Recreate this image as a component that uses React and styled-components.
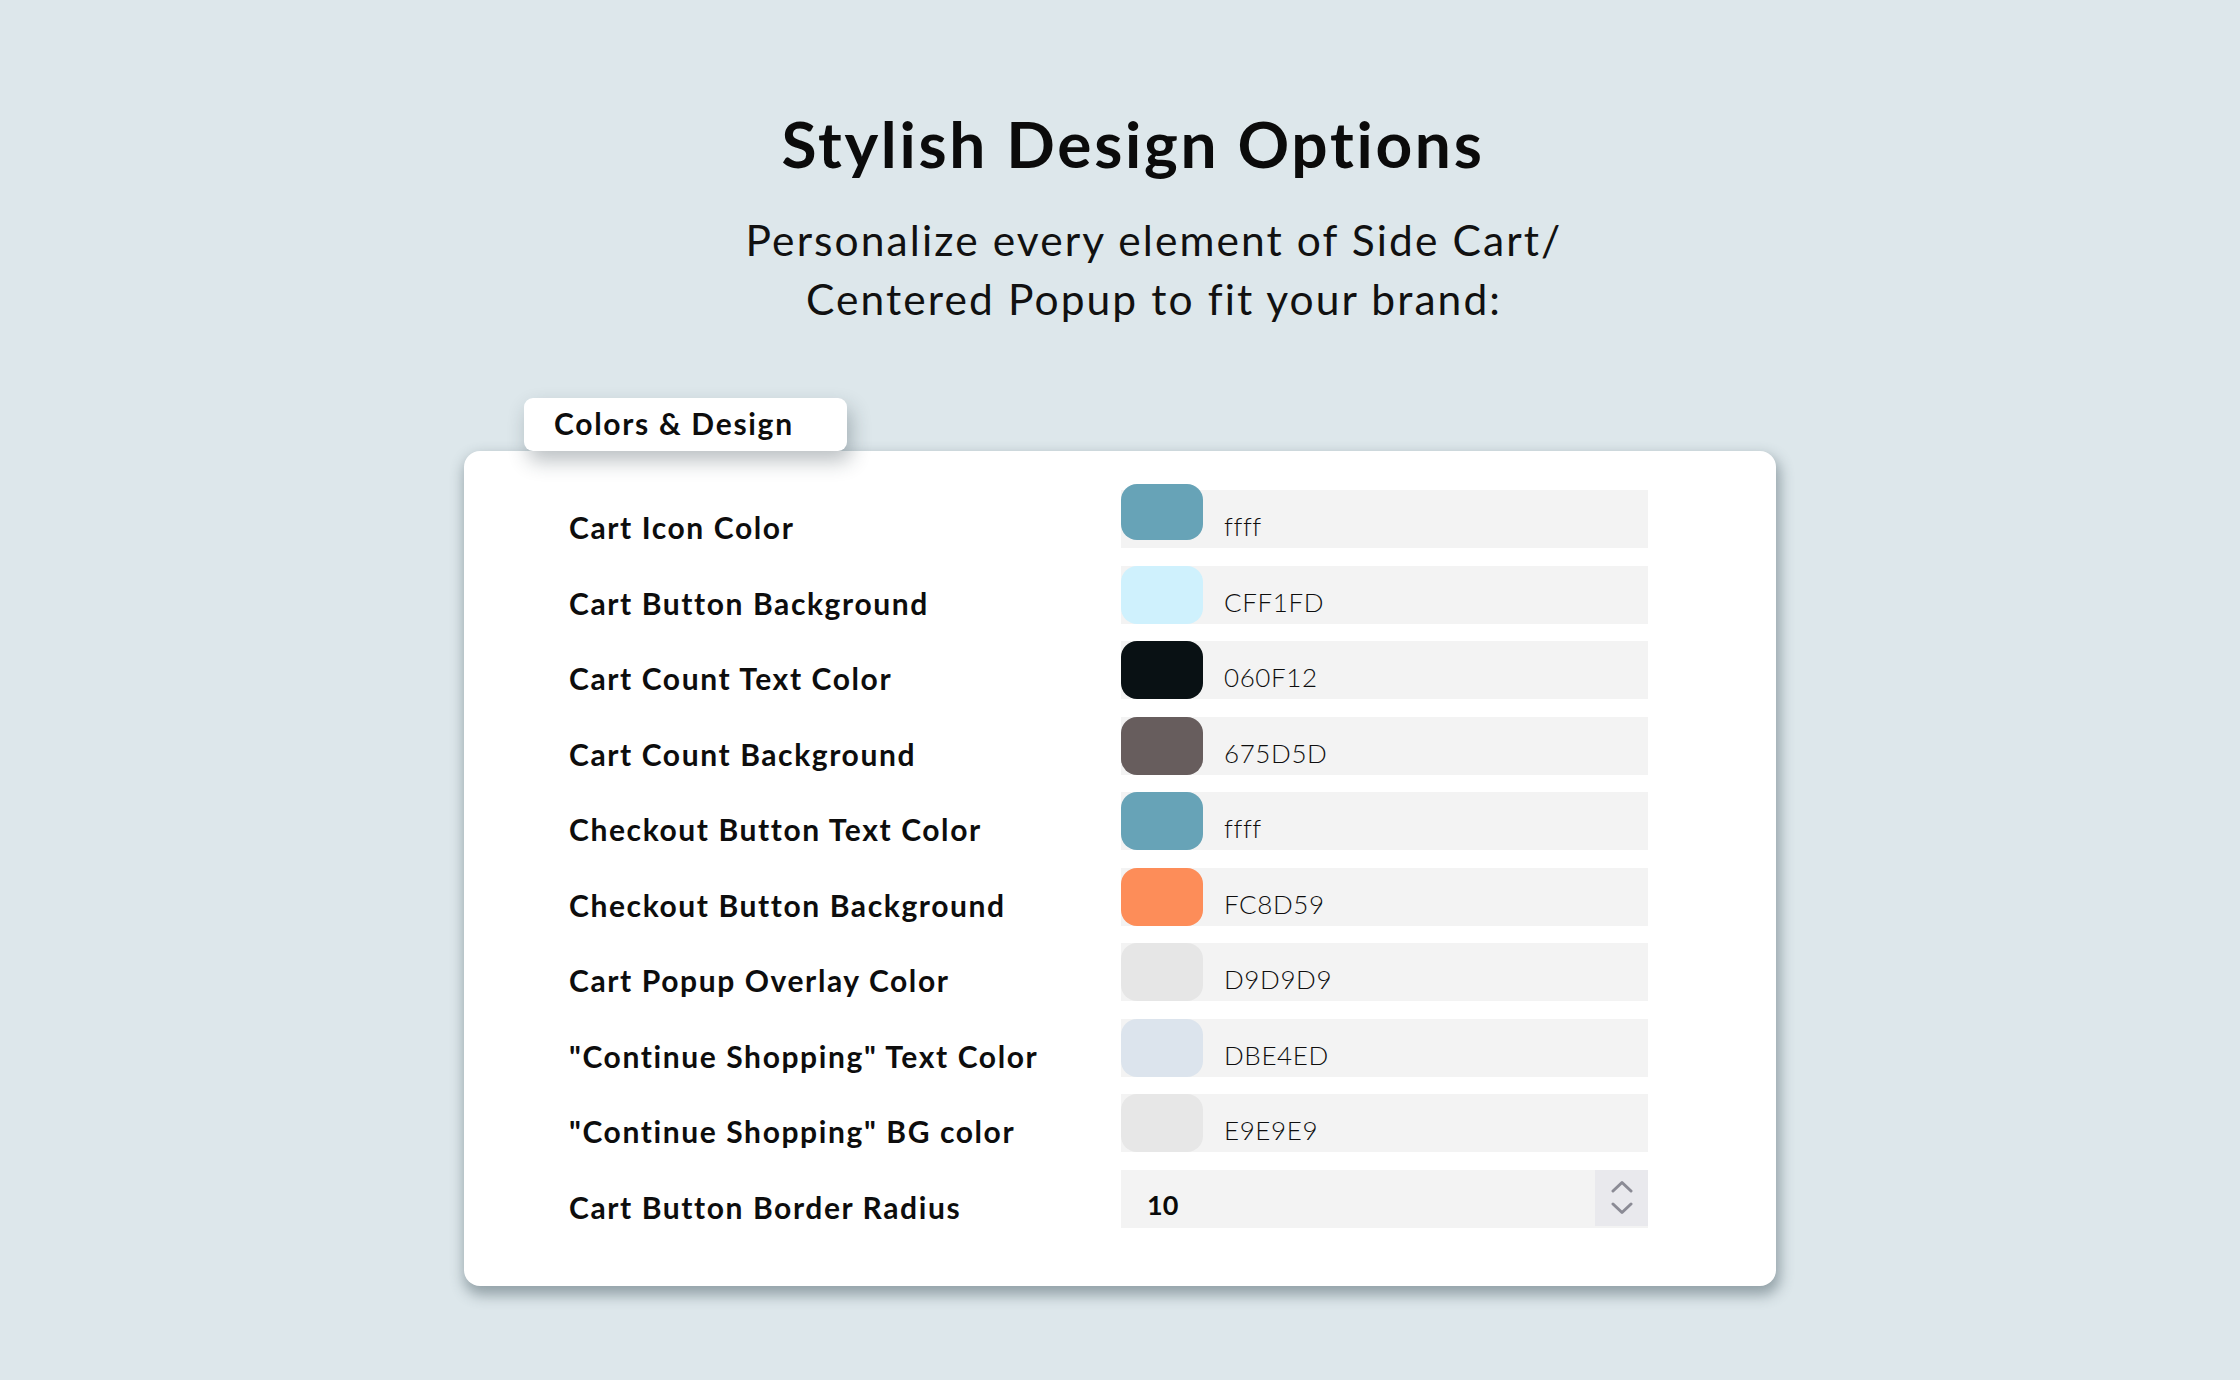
import React from "react";
import styled, { createGlobalStyle } from "styled-components";

const Global = createGlobalStyle`
  html, body { margin: 0; padding: 0; background: #dde7eb; }
  body { font-family: Lato, "Noto Sans", sans-serif; color: #0d0d0d; }
`;

const Page = styled.div`
  width: 2240px;
  height: 1380px;
  display: flex;
  flex-direction: column;
  align-items: center;
  box-sizing: border-box;
  padding-top: 104px;
`;

const Title = styled.h1`
  margin: 0;
  padding-left: 26px;
  font-family: Lato, "Noto Sans", sans-serif;
  font-size: 64px;
  font-weight: 700;
  line-height: 80px;
  letter-spacing: 2.7px;
  color: #0b0b0b;
  text-align: center;
`;

const Subtitle = styled.p`
  margin: 26px 0 0;
  padding-left: 68px;
  font-family: Lato, "Noto Sans", sans-serif;
  font-size: 42.5px;
  font-weight: 400;
  line-height: 59px;
  letter-spacing: 2.1px;
  color: #111;
  text-align: center;
`;

const Panel = styled.section`
  width: 1312px;
  margin-top: 70px;
  display: flex;
  flex-direction: column;
`;

const Tab = styled.div`
  position: relative;
  z-index: 2;
  align-self: flex-start;
  margin-left: 60px;
  width: 323px;
  height: 53px;
  box-sizing: border-box;
  padding: 6px 0 0 30px;
  background: #fff;
  border-radius: 9px;
  box-shadow: 4px 10px 20px rgba(30, 45, 55, 0.3);
  font-size: 30px;
  font-weight: 700;
  line-height: 38px;
  letter-spacing: 1.7px;
  color: #0d0d0d;
`;

const Card = styled.div`
  position: relative;
  z-index: 1;
  height: 835px;
  box-sizing: border-box;
  background: #fff;
  border-radius: 16px;
  padding: 39px 128px 60px 105px;
  box-shadow: 2px 7px 14px 2px rgba(55, 75, 85, 0.45);
  display: grid;
  grid-template-columns: 552px 527px;
  grid-auto-rows: 58px;
  row-gap: 17.5px;
`;

const Label = styled.div`
  padding-top: 19px;
  font-size: 30px;
  font-weight: 700;
  line-height: 36px;
  letter-spacing: 1.6px;
  color: #0d0d0d;
  white-space: nowrap;
`;

const Field = styled.div`
  position: relative;
  display: flex;
  align-items: flex-start;
  height: 58px;
  background: #f3f3f3;
`;

const Swatch = styled.div`
  flex: none;
  width: 82px;
  height: ${(p) => (p.$raised ? "56px" : "58px")};
  margin-top: ${(p) => (p.$raised ? "-6px" : "0")};
  border-radius: 16px;
  background: ${(p) => p.$color};
`;

const Hex = styled.span`
  margin-left: 21px;
  padding-top: 20px;
  font-family: Lato, "Noto Sans", sans-serif;
  font-size: 26px;
  font-weight: 300;
  line-height: 32px;
  letter-spacing: 0.6px;
  color: #0e0e0e;
`;

const NumberValue = styled.span`
  flex: 1;
  padding: 18px 0 0 26px;
  font-size: 27px;
  font-weight: 700;
  line-height: 34px;
  color: #0a0a0a;
`;

const Spinner = styled.div`
  flex: none;
  width: 53px;
  height: 56px;
  background: #e9e9ed;
  display: flex;
  flex-direction: column;
  align-items: center;
  justify-content: center;
  gap: 9px;
`;

const Chevron = ({ up }) => (
  <svg width="22" height="13" viewBox="0 0 22 13" fill="none">
    <path
      d={up ? "M2 11 L11 2.5 L20 11" : "M2 2 L11 10.5 L20 2"}
      stroke="#8b8b95"
      strokeWidth="3"
      strokeLinecap="round"
      strokeLinejoin="round"
    />
  </svg>
);

const rows = [
  { label: "Cart Icon Color", color: "#67a3b7", value: "ffff", raised: true },
  { label: "Cart Button Background", color: "#cff1fd", value: "CFF1FD" },
  { label: "Cart Count Text Color", color: "#091114", value: "060F12" },
  { label: "Cart Count Background", color: "#675d5d", value: "675D5D" },
  { label: "Checkout Button Text Color", color: "#67a3b7", value: "ffff" },
  { label: "Checkout Button Background", color: "#fd8d59", value: "FC8D59" },
  { label: "Cart Popup Overlay Color", color: "#e6e6e6", value: "D9D9D9" },
  { label: "\"Continue Shopping\" Text Color", color: "#dce4ed", value: "DBE4ED" },
  { label: "\"Continue Shopping\" BG color", color: "#e7e7e7", value: "E9E9E9" },
];

export default function App() {
  return (
    <>
      <Global />
      <Page>
        <Title>Stylish Design Options</Title>
        <Subtitle>
          Personalize every element of Side Cart/
          <br />
          Centered Popup to fit your brand:
        </Subtitle>
        <Panel>
          <Tab>Colors &amp; Design</Tab>
          <Card>
            {rows.map((r) => (
              <React.Fragment key={r.label}>
                <Label>{r.label}</Label>
                <Field>
                  <Swatch $color={r.color} $raised={r.raised} />
                  <Hex>{r.value}</Hex>
                </Field>
              </React.Fragment>
            ))}
            <Label>Cart Button Border Radius</Label>
            <Field>
              <NumberValue>10</NumberValue>
              <Spinner>
                <Chevron up />
                <Chevron />
              </Spinner>
            </Field>
          </Card>
        </Panel>
      </Page>
    </>
  );
}
